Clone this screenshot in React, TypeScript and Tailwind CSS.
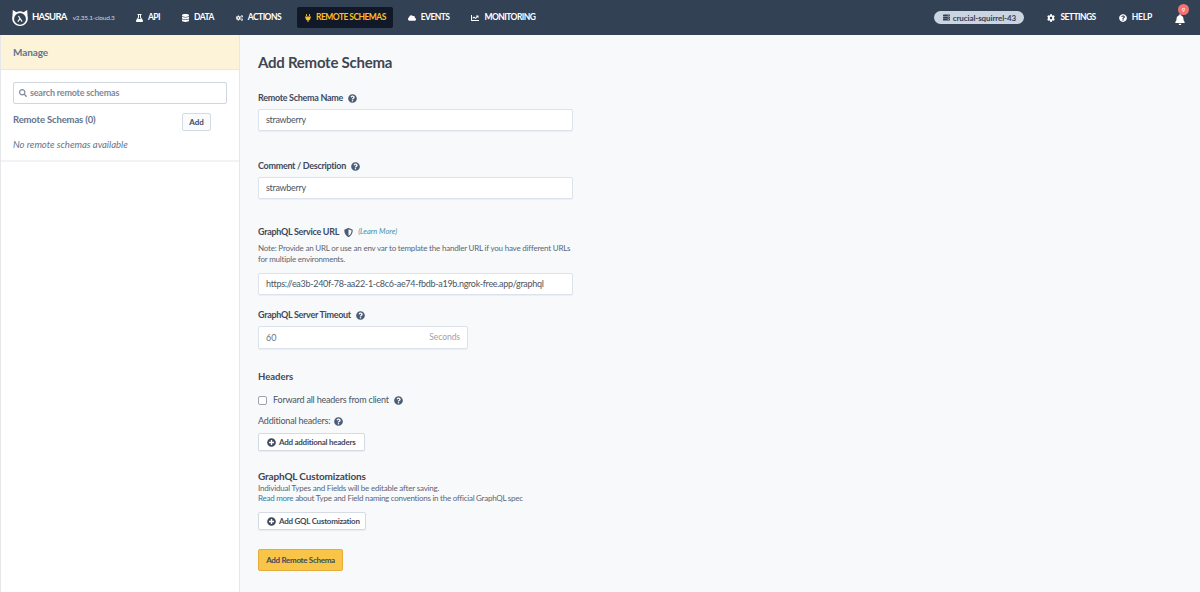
import { FaBell, FaChartLine, FaCloud, FaCog, FaCogs, FaDatabase, FaFlask, FaPlug, FaPlusCircle, FaQuestionCircle, FaSearch, FaServer, FaShieldAlt } from "react-icons/fa";

const nav = [
  { label: "API", icon: <FaFlask className="h-[8px] w-[7px] shrink-0" />, active: false },
  { label: "DATA", icon: <FaDatabase className="h-[8px] w-[7px] shrink-0" />, active: false },
  { label: "ACTIONS", icon: <FaCogs className="h-[8px] w-[7px] shrink-0" />, active: false },
  { label: "REMOTE SCHEMAS", icon: <FaPlug className="h-[8px] w-[6px] shrink-0" />, active: true },
  { label: "EVENTS", icon: <FaCloud className="h-[8px] w-[8px] shrink-0" />, active: false },
  { label: "MONITORING", icon: <FaChartLine className="h-[8px] w-[8px] shrink-0" />, active: false },
];

function Logo() {
  return (
    <svg viewBox="0 0 20 20" className="h-[18px] w-[18px] shrink-0" fill="none">
      <path d="M2 1 L6 3.6 A8.6 8.6 0 0 1 14 3.6 L18 1 L18.4 8 A8.7 8.7 0 1 1 1.6 8 Z" fill="#fff" />
      <circle cx="10" cy="11" r="6.6" fill="#334155" />
      <path d="M8.2 7.8 L12.4 14 M10 10.6 L7.6 14" stroke="#fff" strokeWidth="1.3" />
    </svg>
  );
}

function Help() {
  return <FaQuestionCircle className="h-[9px] w-[9px] shrink-0 text-[#4b5c75]" />;
}

function Label({ text, children }: { text: string; children?: React.ReactNode }) {
  return (
    <div className="flex items-center gap-[5px] text-[9px] leading-[14px] font-bold tracking-[-0.3px] text-[#3f4a5c]">
      {text}
      {children}
    </div>
  );
}

function TextInput({ value, className }: { value: string; className: string }) {
  return (
    <div className={`${className} flex h-[22px] w-[315px] items-center rounded-[2px] border border-[#dde3ec] bg-white px-[7px] text-[9px] tracking-[-0.3px] text-[#4b5563] shadow-[0_1px_1px_rgba(0,0,0,0.05)]`}>
      {value}
    </div>
  );
}

function OutlineButton({ text, width }: { text: string; width: string }) {
  return (
    <button className={`flex h-[18px] ${width} items-center gap-[3px] rounded-[2px] border border-[#d5dbe5] bg-white pl-[8px] text-[8px] font-bold tracking-[-0.25px] text-[#3f4a5c] shadow-[0_1px_1px_rgba(0,0,0,0.06)]`}>
      <FaPlusCircle className="h-[9px] w-[9px] shrink-0 text-[#3f4a5c]" />
      {text}
    </button>
  );
}

export default function App() {
  return (
    <div className="flex h-[592px] w-[1200px] flex-col overflow-hidden bg-[#f8f9fb] font-['Lato',sans-serif] whitespace-nowrap">
      <header className="flex h-[35px] shrink-0 items-center bg-[#334155] text-white">
        <div className="flex w-[125px] items-center pl-[11px]">
          <Logo />
          <span className="ml-[3px] text-[9.5px] font-bold tracking-[-0.7px]">HASURA</span>
          <span className="ml-[6px] text-[6.5px] tracking-[-0.2px] text-[#cbd5e1]">v2.35.1-cloud.3</span>
        </div>
        <nav className="flex items-center">
          {nav.map((n) => (
            <div
              key={n.label}
              className={`flex h-[21px] items-center gap-[5px] rounded-[2px] text-[8.5px] font-bold tracking-[-0.55px] ${n.active ? "mr-[4px] ml-[5px] bg-[#111827] pr-[7px] pl-[8px] text-[#fbbf24]" : "px-[11px] text-white"}`}
            >
              {n.icon}
              {n.label}
            </div>
          ))}
        </nav>
        <div className="ml-auto flex items-center pr-[11px]">
          <div className="flex h-[13px] w-[90px] items-center justify-center gap-[3px] rounded-full bg-[#cbd5e1] text-[8px] font-bold tracking-[-0.1px] text-[#334155]">
            <FaServer className="h-[7px] w-[7px] shrink-0" />
            crucial-squirrel-43
          </div>
          <div className="ml-[23px] flex items-center gap-[5px] text-[8.5px] font-bold tracking-[-0.55px]">
            <FaCog className="h-[8px] w-[8px] shrink-0" />
            SETTINGS
          </div>
          <div className="ml-[23px] flex items-center gap-[5px] text-[8.5px] font-bold tracking-[-0.2px]">
            <FaQuestionCircle className="h-[8px] w-[8px] shrink-0" />
            HELP
          </div>
          <div className="relative mt-[4px] mr-[4px] ml-[23px]">
            <FaBell className="h-[11px] w-[10px]" />
            <span className="absolute -top-[10px] left-[3px] flex h-[11px] w-[11px] items-center justify-center rounded-full bg-[#f87171] text-[6px]">9</span>
          </div>
        </div>
      </header>
      <div className="flex min-h-0 flex-1">
        <aside className="w-[240px] shrink-0 border-x border-[#e5e7eb] bg-white">
          <div className="flex h-[35px] items-center border-b border-[#f3e7c4] bg-[#fdf3d8] pl-[12px] text-[10px] font-bold tracking-[-0.1px] text-[#64748b]">
            Manage
          </div>
          <div className="border-b-2 border-[#f1f3f6] px-[12px] pt-[12px] pb-[8px]">
            <div className="flex h-[22px] w-[214px] items-center gap-[3px] rounded-[2px] border border-[#cfd6e0] bg-white pl-[5px] text-[9px] font-bold tracking-[-0.2px] text-[#808a99]">
              <FaSearch className="h-[8px] w-[8px] shrink-0 text-[#808a99]" />
              search remote schemas
            </div>
            <div className="mt-[9px] flex items-start justify-between pr-[16px]">
              <span className="text-[9.5px] leading-[14px] font-bold tracking-[-0.15px] text-[#64748b]">Remote Schemas (0)</span>
              <button className="h-[18px] w-[29px] rounded-[2px] border border-[#d5dbe5] bg-[#fafbfc] text-[8px] font-bold text-[#3f4a5c]">Add</button>
            </div>
            <div className="mt-[7px] text-[9.5px] leading-[14px] text-[#64748b] italic">No remote schemas available</div>
          </div>
        </aside>
        <main className="flex-1 pl-[18px]">
          <h1 className="mt-[17px] text-[15px] leading-[20px] font-bold tracking-[-0.25px] text-[#3f4650]">Add Remote Schema</h1>
          <div className="mt-[19px]">
            <Label text="Remote Schema Name"><Help /></Label>
            <TextInput value="strawberry" className="mt-[4px]" />
          </div>
          <div className="mt-[28px]">
            <Label text="Comment / Description"><Help /></Label>
            <TextInput value="strawberry" className="mt-[4px]" />
          </div>
          <div className="mt-[26px]">
            <Label text="GraphQL Service URL">
              <FaShieldAlt className="h-[9px] w-[9px] shrink-0 text-[#4b5c75]" />
              <span className="text-[7.5px] font-normal tracking-normal text-[#4a8fa8] italic">(Learn More)</span>
            </Label>
            <p className="mt-[4px] text-[8px] leading-[11px] tracking-[-0.2px] text-[#5b6675]">
              Note: Provide an URL or use an env var to template the handler URL if you have different URLs
              <br />
              for multiple environments.
            </p>
            <TextInput value="https://ea3b-240f-78-aa22-1-c8c6-ae74-fbdb-a19b.ngrok-free.app/graphql" className="mt-[8px]" />
          </div>
          <div className="mt-[13px]">
            <Label text="GraphQL Server Timeout"><Help /></Label>
            <div className="mt-[4px] flex h-[23px] w-[210px] items-center justify-between rounded-[2px] border border-[#dde3ec] bg-white px-[7px] text-[9px] text-[#6b7280] shadow-[0_1px_1px_rgba(0,0,0,0.05)]">
              <span>60</span>
              <span className="text-[8.5px] tracking-[-0.05px] text-[#9ca3af]">Seconds</span>
            </div>
          </div>
          <div className="mt-[21px] text-[9.5px] leading-[14px] font-bold text-[#3f4a5c]">Headers</div>
          <div className="mt-[9px] flex items-center text-[9px] leading-[14px] tracking-[-0.2px] text-[#4b5563]">
            <span className="h-[9px] w-[9px] rounded-[2px] border border-[#9aa3af] bg-white" />
            <span className="ml-[6px]">Forward all headers from client</span>
            <span className="ml-[5px]"><Help /></span>
          </div>
          <div className="mt-[7px] flex items-center gap-[4px] text-[9px] leading-[14px] tracking-[-0.2px] text-[#4b5563]">
            Additional headers:
            <Help />
          </div>
          <div className="mt-[5px]"><OutlineButton text="Add additional headers" width="w-[107px]" /></div>
          <div className="mt-[19px] text-[10px] leading-[13px] font-bold tracking-[-0.15px] text-[#3f4650]">GraphQL Customizations</div>
          <p className="text-[8px] leading-[10px] tracking-[-0.2px] text-[#5b6675]">Individual Types and Fields will be editable after saving.</p>
          <p className="text-[8px] leading-[10px] tracking-[-0.25px] text-[#5b6675]"><span className="text-[#2f7ea8]">Read more</span> about Type and Field naming conventions in the official GraphQL spec</p>
          <div className="mt-[9px]"><OutlineButton text="Add GQL Customization" width="w-[108px]" /></div>
          <button className="mt-[19px] h-[22px] w-[85px] rounded-[2px] border border-[#e5ac3c] bg-[#f9c548] text-[8px] font-bold tracking-[-0.3px] text-[#3f4a5c]">Add Remote Schema</button>
        </main>
      </div>
    </div>
  );
}
